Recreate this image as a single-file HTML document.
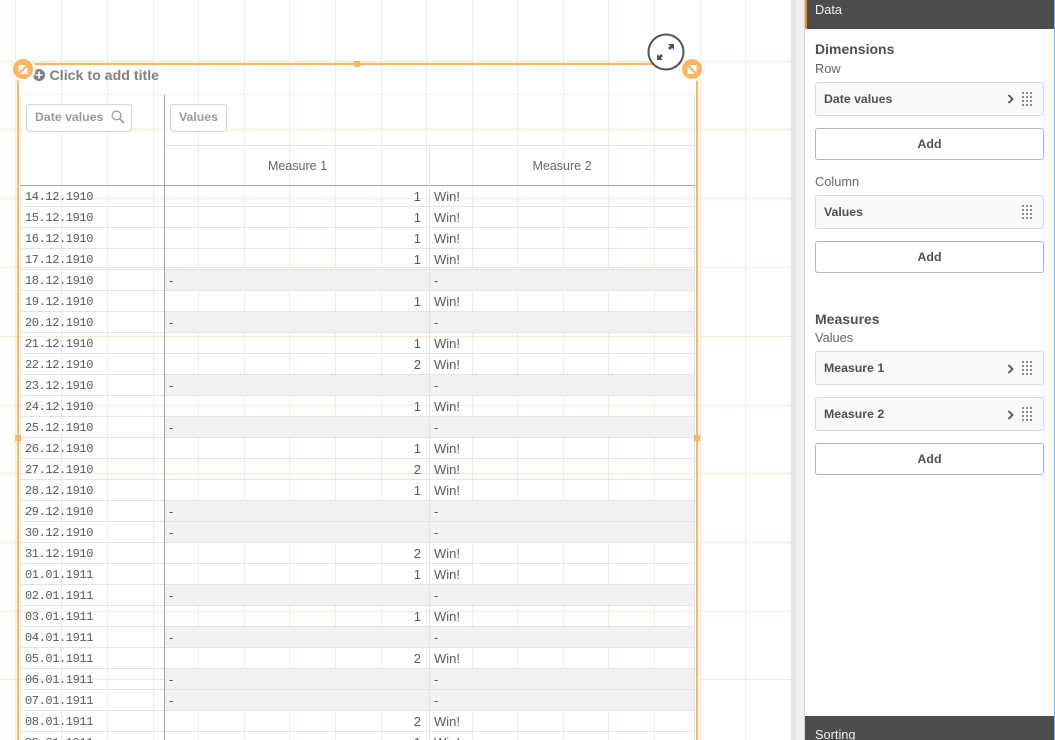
<!DOCTYPE html>
<html>
<head>
<meta charset="utf-8">
<style>
html,body{margin:0;padding:0;background:#fff;width:1055px;height:740px;overflow:hidden;}
#p{position:relative;width:1055px;height:740px;overflow:hidden;font-family:"Liberation Sans",sans-serif;color:#595959;}
.a{position:absolute;}
.v{position:absolute;top:0;width:1px;height:740px;background:#fde8d4;}
.h{position:absolute;left:0;width:791px;height:1px;background:#fde8d4;}
.r{position:absolute;left:21px;width:673px;height:20px;border-bottom:1px solid #e3e3e3;font-size:13px;line-height:21.5px;color:#595959;}
.r.g::before{content:"";position:absolute;left:144px;right:0;top:0;bottom:0;background:#f1f1f1;}
.r span{position:absolute;top:0;white-space:nowrap;}
.r .d{left:4px;top:1px;font-family:"Liberation Mono",monospace;font-size:12px;letter-spacing:-0.4px;}
.n{right:273px;}
.w{left:413px;}
.m{left:148px;}
.box{position:absolute;left:815px;width:229px;box-sizing:border-box;border:1px solid #d9d9d9;border-radius:3px;background:#f9f9f9;height:34px;font-weight:bold;font-size:12.3px;line-height:33px;padding-left:8px;color:#4f4f4f;}
.add{position:absolute;left:815px;width:229px;height:32px;box-sizing:border-box;border:1px solid #b5b5b5;border-radius:3px;background:#fff;font-weight:bold;font-size:12.3px;line-height:30px;text-align:center;color:#4f4f4f;}
.lab{position:absolute;left:815px;font-size:12.8px;line-height:15px;color:#666;}
.hd{position:absolute;left:815px;font-size:14px;font-weight:bold;line-height:16px;color:#505050;}
svg{position:absolute;overflow:visible;}
</style>
</head>
<body>
<div id="p">
<div class="v" style="left:15px"></div><div class="v" style="left:61px"></div><div class="v" style="left:107px"></div><div class="v" style="left:153px"></div><div class="v" style="left:198px"></div><div class="v" style="left:244px"></div><div class="v" style="left:289px"></div><div class="v" style="left:335px"></div><div class="v" style="left:381px"></div><div class="v" style="left:426px"></div><div class="v" style="left:472px"></div><div class="v" style="left:517px"></div><div class="v" style="left:563px"></div><div class="v" style="left:608px"></div><div class="v" style="left:654px"></div><div class="v" style="left:700px"></div><div class="v" style="left:745px"></div>
<div class="h" style="top:61px"></div><div class="h" style="top:129px"></div><div class="h" style="top:198px"></div><div class="h" style="top:267px"></div><div class="h" style="top:336px"></div><div class="h" style="top:405px"></div><div class="h" style="top:473px"></div><div class="h" style="top:542px"></div><div class="h" style="top:611px"></div><div class="h" style="top:679px"></div>

<!-- table frame -->
<div class="a" style="left:20px;top:94px;width:675px;height:1px;background:#f0f0f0"></div>
<div class="a" style="left:20px;top:94px;width:1px;height:646px;background:#ececec"></div>
<div class="a" style="left:694px;top:94px;width:1px;height:646px;background:#e2e2e2"></div>
<div class="a" style="left:164px;top:145px;width:530px;height:1px;background:#e3e3e3"></div>
<div class="a" style="left:20px;top:185px;width:675px;height:1px;background:#a5a5a5"></div>

<div class="r" style="top:186px"><span class="d">14.12.1910</span><span class="n">1</span><span class="w">Win!</span></div>
<div class="r" style="top:207px"><span class="d">15.12.1910</span><span class="n">1</span><span class="w">Win!</span></div>
<div class="r" style="top:228px"><span class="d">16.12.1910</span><span class="n">1</span><span class="w">Win!</span></div>
<div class="r" style="top:249px"><span class="d">17.12.1910</span><span class="n">1</span><span class="w">Win!</span></div>
<div class="r g" style="top:270px"><span class="d">18.12.1910</span><span class="m">-</span><span class="w">-</span></div>
<div class="r" style="top:291px"><span class="d">19.12.1910</span><span class="n">1</span><span class="w">Win!</span></div>
<div class="r g" style="top:312px"><span class="d">20.12.1910</span><span class="m">-</span><span class="w">-</span></div>
<div class="r" style="top:333px"><span class="d">21.12.1910</span><span class="n">1</span><span class="w">Win!</span></div>
<div class="r" style="top:354px"><span class="d">22.12.1910</span><span class="n">2</span><span class="w">Win!</span></div>
<div class="r g" style="top:375px"><span class="d">23.12.1910</span><span class="m">-</span><span class="w">-</span></div>
<div class="r" style="top:396px"><span class="d">24.12.1910</span><span class="n">1</span><span class="w">Win!</span></div>
<div class="r g" style="top:417px"><span class="d">25.12.1910</span><span class="m">-</span><span class="w">-</span></div>
<div class="r" style="top:438px"><span class="d">26.12.1910</span><span class="n">1</span><span class="w">Win!</span></div>
<div class="r" style="top:459px"><span class="d">27.12.1910</span><span class="n">2</span><span class="w">Win!</span></div>
<div class="r" style="top:480px"><span class="d">28.12.1910</span><span class="n">1</span><span class="w">Win!</span></div>
<div class="r g" style="top:501px"><span class="d">29.12.1910</span><span class="m">-</span><span class="w">-</span></div>
<div class="r g" style="top:522px"><span class="d">30.12.1910</span><span class="m">-</span><span class="w">-</span></div>
<div class="r" style="top:543px"><span class="d">31.12.1910</span><span class="n">2</span><span class="w">Win!</span></div>
<div class="r" style="top:564px"><span class="d">01.01.1911</span><span class="n">1</span><span class="w">Win!</span></div>
<div class="r g" style="top:585px"><span class="d">02.01.1911</span><span class="m">-</span><span class="w">-</span></div>
<div class="r" style="top:606px"><span class="d">03.01.1911</span><span class="n">1</span><span class="w">Win!</span></div>
<div class="r g" style="top:627px"><span class="d">04.01.1911</span><span class="m">-</span><span class="w">-</span></div>
<div class="r" style="top:648px"><span class="d">05.01.1911</span><span class="n">2</span><span class="w">Win!</span></div>
<div class="r g" style="top:669px"><span class="d">06.01.1911</span><span class="m">-</span><span class="w">-</span></div>
<div class="r g" style="top:690px"><span class="d">07.01.1911</span><span class="m">-</span><span class="w">-</span></div>
<div class="r" style="top:711px"><span class="d">08.01.1911</span><span class="n">2</span><span class="w">Win!</span></div>
<div class="r" style="top:732px"><span class="d">09.01.1911</span><span class="n">1</span><span class="w">Win!</span></div>

<div class="a" style="left:164px;top:95px;width:1px;height:645px;background:#a5a5a5"></div>
<div class="a" style="left:429px;top:145px;width:1px;height:595px;background:#e3e3e3"></div>

<!-- header -->
<div class="a" style="left:165px;top:159px;width:265px;text-align:center;font-size:12.5px;line-height:15px;color:#666">Measure 1</div>
<div class="a" style="left:430px;top:159px;width:264px;text-align:center;font-size:12.5px;line-height:15px;color:#666">Measure 2</div>

<div class="a" style="left:26px;top:104px;width:106px;height:28px;box-sizing:border-box;border:1px solid #d4d4d4;border-radius:3px;background:#fff;font-weight:bold;font-size:12.3px;line-height:25px;padding-left:8px;color:#9a9a9a">Date values</div>
<svg style="left:111px;top:110px" width="14" height="14" viewBox="0 0 14 14"><circle cx="5.5" cy="5.5" r="4.4" fill="none" stroke="#9a9a9a" stroke-width="1.2"/><path d="M8.5 8.5L13 13" stroke="#9a9a9a" stroke-width="1.6"/></svg>
<div class="a" style="left:170px;top:104px;width:57px;height:28px;box-sizing:border-box;border:1px solid #d4d4d4;border-radius:3px;background:#fff;font-weight:bold;font-size:12.3px;line-height:25px;text-align:center;color:#9a9a9a">Values</div>

<!-- title -->
<svg style="left:33px;top:69px" width="12" height="12" viewBox="0 0 12 12"><circle cx="6" cy="6" r="6" fill="#7f7f7f"/><path d="M6 2.5V9.5M2.5 6H9.5" stroke="#fff" stroke-width="1.6"/></svg>
<div class="a" style="left:49.5px;top:67px;font-weight:bold;font-size:14.2px;line-height:18px;color:#808080;white-space:nowrap">Click to add title</div>

<!-- selection border -->
<div class="a" style="left:17px;top:63px;width:681px;height:2px;background:#ffb45f"></div>
<div class="a" style="left:17px;top:63px;width:2px;height:677px;background:#ffb45f"></div>
<div class="a" style="left:696px;top:63px;width:2px;height:677px;background:#ffb45f"></div>
<div class="a" style="left:354px;top:61px;width:6px;height:6px;background:#ffb45f"></div>
<div class="a" style="left:15px;top:435px;width:6px;height:6px;background:#ffb45f"></div>
<div class="a" style="left:694px;top:435px;width:6px;height:6px;background:#ffb45f"></div>

<!-- corner handles -->
<svg style="left:10px;top:56px" width="26" height="26" viewBox="0 0 26 26"><circle cx="13" cy="13" r="12.5" fill="#fff" stroke="#fde9d7" stroke-width="0.6"/><circle cx="13" cy="13" r="10" fill="#ffb45f"/><rect x="8.500" y="9" width="9" height="9" fill="#fff"/><path d="M7.500 19L18.500 8" stroke="#ffb45f" stroke-width="2.200"/></svg>
<svg style="left:679px;top:56px" width="26" height="26" viewBox="0 0 26 26"><circle cx="13" cy="13" r="12.5" fill="#fff" stroke="#fde9d7" stroke-width="0.6"/><circle cx="13" cy="13" r="10" fill="#ffb45f"/><rect x="8.500" y="9" width="9" height="9" fill="#fff"/><path d="M7.500 8L18.500 19" stroke="#ffb45f" stroke-width="2.200"/></svg>

<!-- expand button -->
<svg style="left:647px;top:33px" width="38" height="38" viewBox="0 0 38 38"><circle cx="19" cy="19" r="17.5" fill="#fff" stroke="#555" stroke-width="2"/><path d="M21 11H27V17L25 15L23 17L21 15L23 13Z" fill="#555"/><path d="M10 21V27H16L14 25L16 23L14 21L12 23Z" fill="#555"/></svg>

<!-- gutter -->
<div class="a" style="left:791px;top:0;width:5px;height:740px;background:#e6e6e6"></div>
<div class="a" style="left:796px;top:0;width:8px;height:740px;background:#f0f0f0"></div>
<div class="a" style="left:804px;top:0;width:1px;height:740px;background:#d0d0d0"></div>
<div class="a" style="left:805px;top:0;width:249px;height:740px;background:#fff"></div>
<div class="a" style="left:1054px;top:0;width:1px;height:740px;background:#5cc8e8"></div>

<!-- panel headers -->
<div class="a" style="left:805px;top:0;width:249px;height:29px;background:#4d4d4d"></div>
<div class="a" style="left:805px;top:0;width:2px;height:29px;background:#f28c1e"></div>
<div class="a" style="left:815px;top:2px;font-size:12.8px;line-height:15px;color:#eee">Data</div>
<div class="a" style="left:805px;top:716px;width:249px;height:24px;background:#4d4d4d"></div>
<div class="a" style="left:815px;top:727px;font-size:12.8px;line-height:15px;color:#eee">Sorting</div>

<div class="hd" style="top:41px">Dimensions</div>
<div class="lab" style="top:61px">Row</div>
<div class="box" style="top:82px">Date values</div>
<div class="add" style="top:128px">Add</div>
<div class="lab" style="top:174px">Column</div>
<div class="box" style="top:195px">Values</div>
<div class="add" style="top:241px">Add</div>
<div class="hd" style="top:311px">Measures</div>
<div class="lab" style="top:330px">Values</div>
<div class="box" style="top:351px">Measure 1</div>
<div class="box" style="top:397px">Measure 2</div>
<div class="add" style="top:443px">Add</div>

<svg style="left:1007px;top:94px" width="8" height="10" viewBox="0 0 8 10"><path d="M1.500 1L5.500 5L1.500 9" fill="none" stroke="#505050" stroke-width="1.800"/></svg>
<svg style="left:1007px;top:364px" width="8" height="10" viewBox="0 0 8 10"><path d="M1.500 1L5.500 5L1.500 9" fill="none" stroke="#505050" stroke-width="1.800"/></svg>
<svg style="left:1007px;top:410px" width="8" height="10" viewBox="0 0 8 10"><path d="M1.500 1L5.500 5L1.500 9" fill="none" stroke="#505050" stroke-width="1.800"/></svg>

<svg style="left:1022px;top:92px" width="11" height="14" viewBox="0 0 11 14"><path d="M0 1H2M4 1H6M8 1H10M0 5H2M4 5H6M8 5H10M0 9H2M4 9H6M8 9H10M0 13H2M4 13H6M8 13H10" stroke="#666" stroke-width="1.500" fill="none"/></svg>
<svg style="left:1022px;top:205px" width="11" height="14" viewBox="0 0 11 14"><path d="M0 1H2M4 1H6M8 1H10M0 5H2M4 5H6M8 5H10M0 9H2M4 9H6M8 9H10M0 13H2M4 13H6M8 13H10" stroke="#666" stroke-width="1.500" fill="none"/></svg>
<svg style="left:1022px;top:361px" width="11" height="14" viewBox="0 0 11 14"><path d="M0 1H2M4 1H6M8 1H10M0 5H2M4 5H6M8 5H10M0 9H2M4 9H6M8 9H10M0 13H2M4 13H6M8 13H10" stroke="#666" stroke-width="1.500" fill="none"/></svg>
<svg style="left:1022px;top:407px" width="11" height="14" viewBox="0 0 11 14"><path d="M0 1H2M4 1H6M8 1H10M0 5H2M4 5H6M8 5H10M0 9H2M4 9H6M8 9H10M0 13H2M4 13H6M8 13H10" stroke="#666" stroke-width="1.500" fill="none"/></svg>
</div>
</body>
</html>
